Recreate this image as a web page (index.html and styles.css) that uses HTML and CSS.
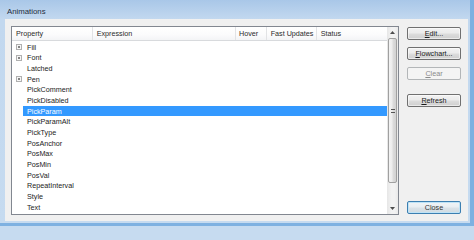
FILE: index.html
```html
<!DOCTYPE html>
<html>
<head>
<meta charset="utf-8">
<link rel="stylesheet" href="styles.css">
</head>
<body>
<div class="window">
  <div class="titlebar"><span class="title">Animations</span></div>
  <div class="frame">
    <div class="client">
      <div class="list">
        <div class="list-main">
          <div class="header">
            <div class="col c-prop">Property</div>
            <div class="col c-expr">Expression</div>
            <div class="col c-hover">Hover</div>
            <div class="col c-fast">Fast Updates</div>
            <div class="col c-status">Status</div>
          </div>
          <div class="rows">
            <div class="row"><span class="exp"><svg width="6" height="6" viewBox="0 0 6 6"><rect x="0.5" y="0.5" width="5" height="5" fill="#f6f6f6" stroke="#b0b0b0"/><path d="M2 3H4M3 2V4" stroke="#444" stroke-width="0.8"/></svg></span><span class="label">Fill</span></div>
            <div class="row"><span class="exp"><svg width="6" height="6" viewBox="0 0 6 6"><rect x="0.5" y="0.5" width="5" height="5" fill="#f6f6f6" stroke="#b0b0b0"/><path d="M2 3H4M3 2V4" stroke="#444" stroke-width="0.8"/></svg></span><span class="label">Font</span></div>
            <div class="row"><span class="exp"></span><span class="label">Latched</span></div>
            <div class="row"><span class="exp"><svg width="6" height="6" viewBox="0 0 6 6"><rect x="0.5" y="0.5" width="5" height="5" fill="#f6f6f6" stroke="#b0b0b0"/><path d="M2 3H4M3 2V4" stroke="#444" stroke-width="0.8"/></svg></span><span class="label">Pen</span></div>
            <div class="row"><span class="exp"></span><span class="label">PickComment</span></div>
            <div class="row"><span class="exp"></span><span class="label">PickDisabled</span></div>
            <div class="row selected"><span class="exp"></span><span class="label">PickParam</span></div>
            <div class="row"><span class="exp"></span><span class="label">PickParamAlt</span></div>
            <div class="row"><span class="exp"></span><span class="label">PickType</span></div>
            <div class="row"><span class="exp"></span><span class="label">PosAnchor</span></div>
            <div class="row"><span class="exp"></span><span class="label">PosMax</span></div>
            <div class="row"><span class="exp"></span><span class="label">PosMin</span></div>
            <div class="row"><span class="exp"></span><span class="label">PosVal</span></div>
            <div class="row"><span class="exp"></span><span class="label">RepeatInterval</span></div>
            <div class="row"><span class="exp"></span><span class="label">Style</span></div>
            <div class="row"><span class="exp"></span><span class="label">Text</span></div>
          </div>
        </div>
        <div class="scrollbar">
          <div class="arrow"><svg width="5" height="3" viewBox="0 0 5 3"><path d="M0 3L2.5 0L5 3Z" fill="#4d4d4d"/></svg></div>
          <div class="thumb"><span class="grip"></span></div>
          <div class="track"></div>
          <div class="arrow"><svg width="5" height="3" viewBox="0 0 5 3"><path d="M0 0L2.5 3L5 0Z" fill="#4d4d4d"/></svg></div>
        </div>
      </div>
      <div class="buttons">
        <div class="btn"><span><u>E</u>dit...</span></div>
        <div class="btn"><span><u>F</u>lowchart...</span></div>
        <div class="btn disabled"><span><u>C</u>lear</span></div>
        <div class="btn gap-big"><span><u>R</u>efresh</span></div>
        <div class="btn default"><span>Close</span></div>
      </div>
    </div>
  </div>
</div>
</body>
</html>
```

FILE: styles.css
```css
html, body {
  margin: 0;
  padding: 0;
  background: #c6dbf0;
}

.window {
  width: 474px;
  height: 226px;
  box-sizing: border-box;
  display: flex;
  flex-direction: column;
  background: linear-gradient(180deg, #a9c7e8 0, #c2d8ef 19px, #c6dbf0 100%);
  box-shadow: inset -4px -3px 0 #7eb1e1;
  font-family: "Liberation Sans", Arial, sans-serif;
  color: #1a1a1a;
}

.titlebar {
  height: 19px;
  box-sizing: border-box;
  display: flex;
  align-items: center;
  padding-left: 7px;
  padding-top: 4px;
  flex-shrink: 0;
}

.title {
  font-size: 7.8px;
  color: #1f2d3d;
}

.frame {
  flex: 1;
  display: flex;
  padding: 0 6px 5px 5px;
  min-height: 0;
}

.client {
  flex: 1;
  display: flex;
  background: #f0f0f0;
  padding: 7px 6.7px 6px 6px;
  gap: 7.7px;
}

/* list view */
.list {
  width: 388px;
  height: 189px;
  box-sizing: border-box;
  border: 1px solid #828790;
  background: #fff;
  display: flex;
  flex-shrink: 0;
}

.list-main {
  flex: 1;
  display: flex;
  flex-direction: column;
  overflow: hidden;
  font-size: 7.2px;
}

.header {
  height: 13.7px;
  display: flex;
  flex-shrink: 0;
  background: linear-gradient(180deg, #ffffff 0, #fbfbfc 60%, #f3f4f6 100%);
  border-bottom: 1px solid #d8dadd;
  box-sizing: border-box;
}

.col {
  box-sizing: border-box;
  border-right: 1px solid #e2e3e5;
  padding-left: 4px;
  padding-top: 1px;
  display: flex;
  align-items: center;
  color: #2a2a2a;
  white-space: nowrap;
}

.c-prop { width: 80.7px; }
.c-expr { width: 143.3px; }
.c-hover { width: 30.7px; padding-left: 3px; }
.c-fast { width: 50px; }
.c-status { flex: 1; border-right: none; }

.rows {
  padding-top: 1px;
  display: flex;
  flex-direction: column;
}

.row {
  height: 10.67px;
  display: flex;
  align-items: center;
  padding-left: 4px;
}

.exp {
  width: 6px;
  height: 6px;
  flex-shrink: 0;
  display: flex;
}

.label {
  flex: 1;
  margin-left: 1px;
  padding-left: 4px;
  height: 10.67px;
  line-height: 11px;
  white-space: nowrap;
  color: #222;
}

.selected .label {
  background: #3399ff;
  color: #ffffff;
}

/* scrollbar */
.scrollbar {
  width: 11px;
  flex-shrink: 0;
  display: flex;
  flex-direction: column;
  background: linear-gradient(90deg, #e6e6e6 0, #f2f2f2 40%, #f2f2f2 70%, #e9e9e9 100%);
}

.arrow {
  height: 11px;
  display: flex;
  align-items: center;
  justify-content: center;
  flex-shrink: 0;
}

.thumb {
  height: 145px;
  margin: 0 1px;
  box-sizing: border-box;
  border: 1px solid #a0a0a0;
  border-radius: 2px;
  background: linear-gradient(90deg, #f3f3f3 0, #ececec 45%, #dcdcdc 55%, #d2d2d2 100%);
  display: flex;
  align-items: center;
  justify-content: center;
  flex-shrink: 0;
}

.grip {
  width: 4px;
  height: 4px;
  background: repeating-linear-gradient(180deg, #555 0, #555 0.8px, transparent 0.8px, transparent 1.6px);
}

.track {
  flex: 1;
}

/* buttons */
.buttons {
  width: 54.6px;
  display: flex;
  flex-direction: column;
  gap: 7.3px;
  padding-top: 1px;
  padding-bottom: 1px;
}

.btn {
  height: 12.7px;
  box-sizing: border-box;
  border: 1px solid #707070;
  border-radius: 2px;
  background: linear-gradient(180deg, #f2f2f2 0, #ebebeb 48%, #dddddd 52%, #cfcfcf 100%);
  box-shadow: inset 0 0 0 1px rgba(255, 255, 255, 0.55);
  font-size: 7.2px;
  display: flex;
  align-items: center;
  justify-content: center;
  color: #1a1a1a;
  flex-shrink: 0;
}

.btn u {
  text-decoration-thickness: 0.6px;
  text-underline-offset: 1px;
}

.btn.disabled {
  border-color: #b3b6b8;
  background: #f4f4f4;
  box-shadow: none;
  color: #8a8a8a;
}

.btn.gap-big {
  margin-top: 7px;
}

.btn.default {
  margin-top: auto;
  border-color: #3c7fb1;
  background: linear-gradient(180deg, #f0f4f7 0, #e8eef2 48%, #dbe3e9 52%, #d0dae1 100%);
  box-shadow: inset 0 0 0 1px #bfe3f6;
  color: #333;
}
```
